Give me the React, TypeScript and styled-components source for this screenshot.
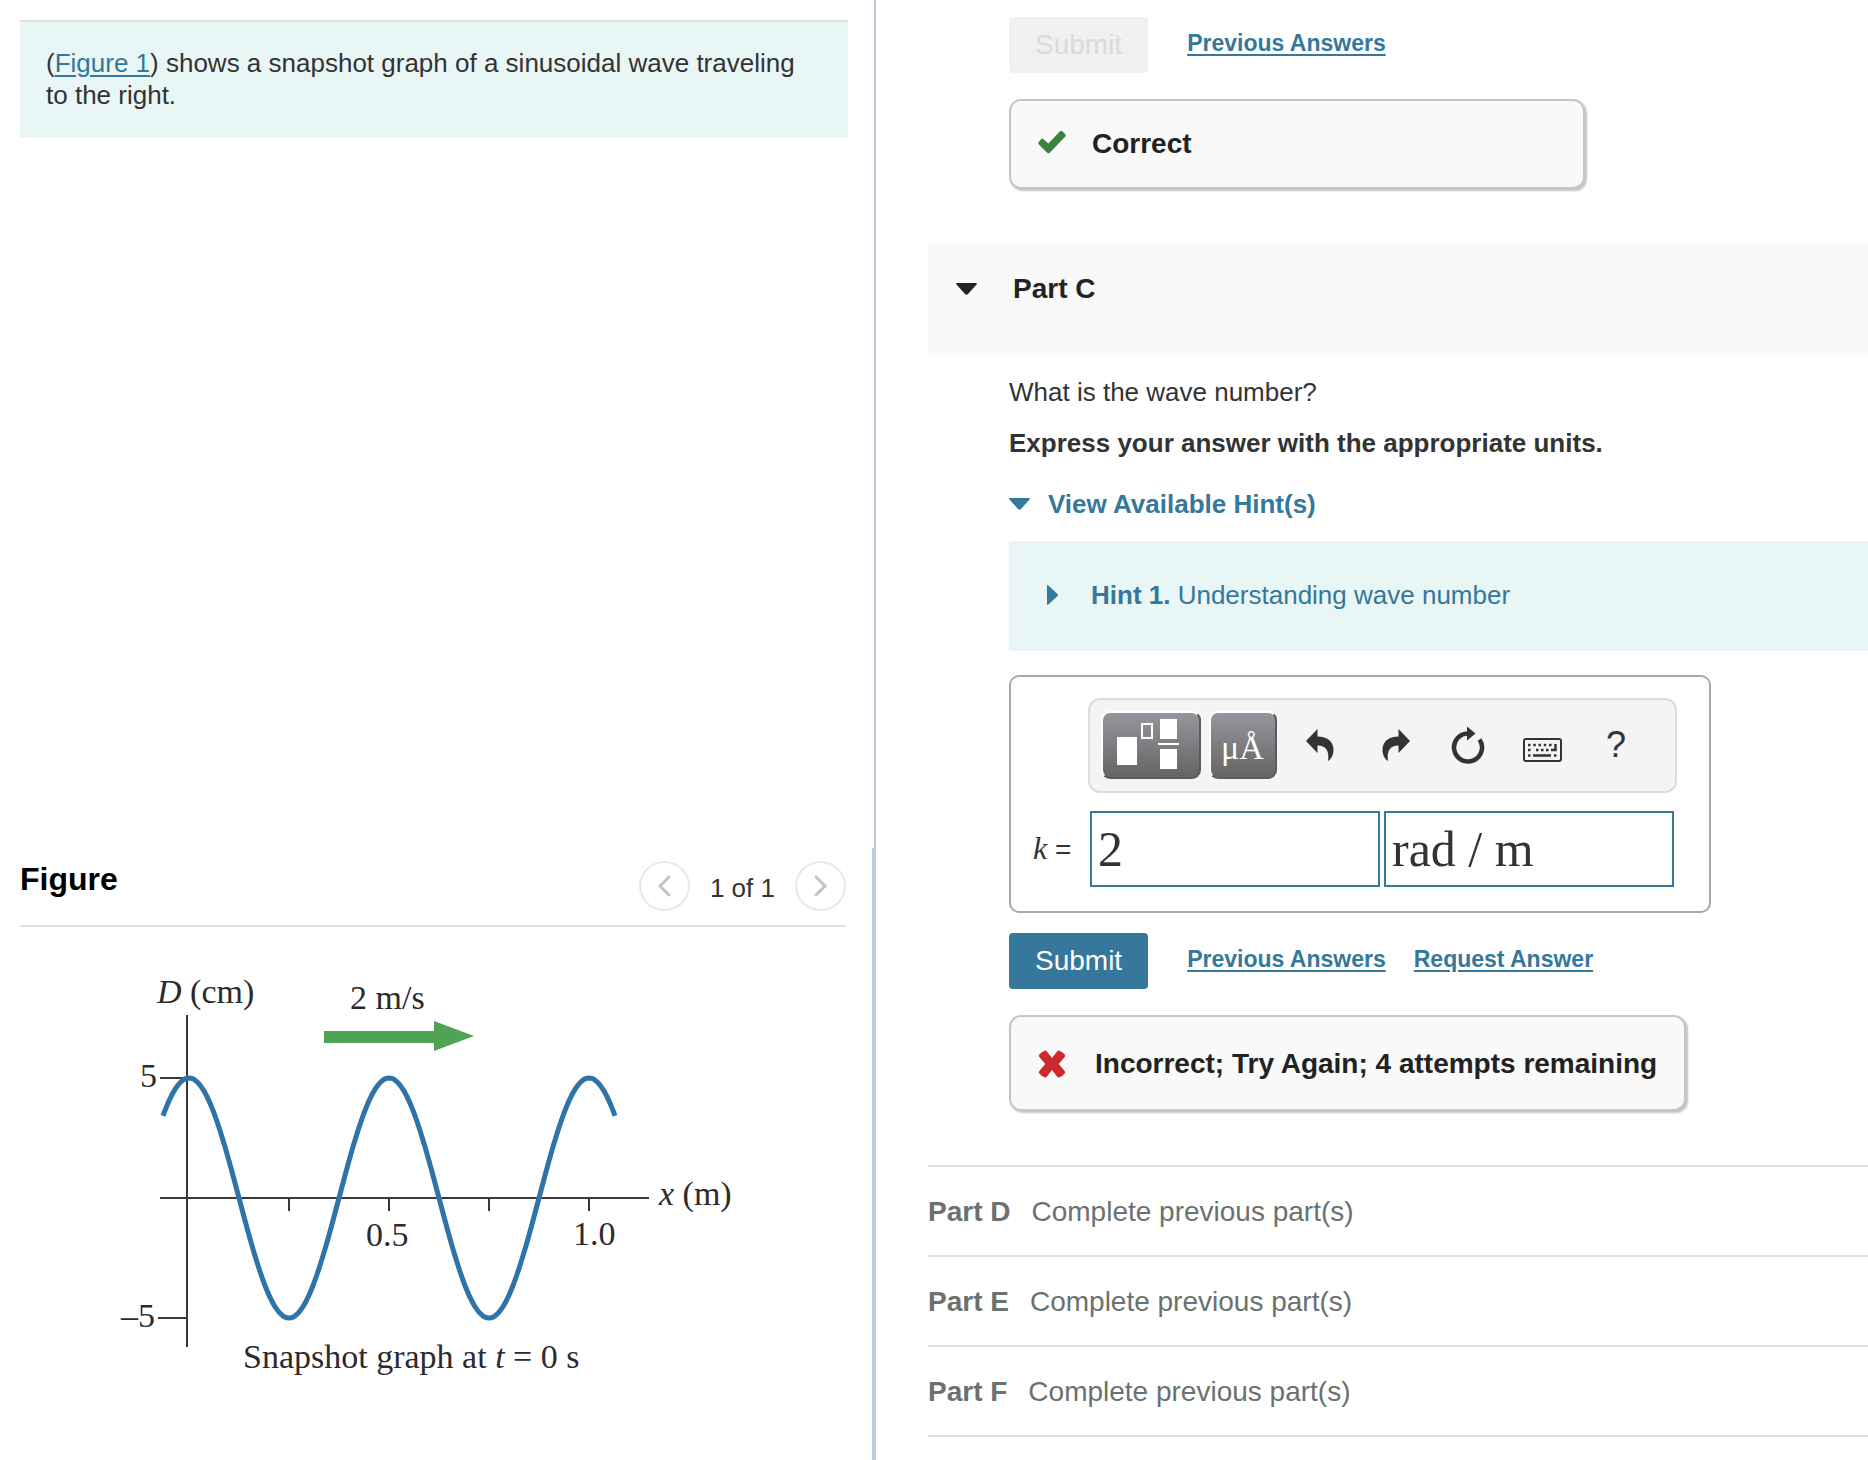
import React, { useState } from "react";
import styled, { createGlobalStyle } from "styled-components";

const teal = "#35789b";
const sans = '"Liberation Sans", Arial, Helvetica, sans-serif';
const serif = '"Liberation Serif", "Times New Roman", serif';

const GlobalStyle = createGlobalStyle`
  *, *::before, *::after { box-sizing: border-box; }
  body {
    margin: 0;
    background: #fff;
    color: #333;
    font-family: ${sans};
    font-size: 26px;
    line-height: 32px;
  }
  p, h2, h3 { margin: 0; }
  button, input { font: inherit; color: inherit; }
  button { cursor: pointer; }
`;

const Page = styled.div`
  display: grid;
  grid-template-columns: minmax(0, 219fr) minmax(0, 248fr);
  min-height: 100vh;
`;

/* ---------- left pane ---------- */

const LeftPane = styled.aside`
  display: flex;
  flex-direction: column;
`;

const Intro = styled.section`
  flex: 1;
  padding: 20px 26px 0 20px;
  border-right: 2px solid #bfc7da;
`;

const Callout = styled.p`
  padding: 25px 26px 27px;
  border-top: 2px solid #dfe1e0;
  background: #e8f6f5;
`;

const TextLink = styled.a`
  color: ${teal};
  text-decoration: underline;
  text-decoration-thickness: 2px;
  text-underline-offset: 3px;
`;

const FigurePane = styled.section`
  padding: 0 26px 60px 20px;
  border-right: 4px solid #bccbe0;
`;

const FigureHeader = styled.header`
  display: flex;
  justify-content: space-between;
  align-items: flex-start;
  padding: 13px 0 14px;
  border-bottom: 2px solid #dfe0e0;
`;

const FigureTitle = styled.h2`
  color: #000;
  font-size: 32px;
  line-height: 36px;
`;

const Pager = styled.nav`
  display: flex;
  align-items: center;
  gap: 20px;
`;

const PagerLabel = styled.span`
  padding-top: 4px;
`;

const PagerButton = styled.button`
  display: grid;
  place-items: center;
  width: 51px;
  height: 50px;
  padding: 0;
  border: 2px solid #e8e8e8;
  border-radius: 50%;
  background: #fff;
`;

const Graph = styled.svg`
  display: block;
  width: 660px;
  max-width: 100%;
  margin: 33px 0 0 80px;
  font-family: ${serif};
  font-size: 34px;
  fill: #2d2a2e;
`;

/* ---------- right pane ---------- */

const RightPane = styled.main`
  padding: 17px 0 22px 52px;
  overflow: hidden;
`;

const Indented = styled.div`
  padding-left: 81px;
`;

const ActionRow = styled.div`
  display: flex;
  align-items: center;
  gap: 39px;
`;

const SubmitButton = styled.button`
  height: 56px;
  padding: 0 26px;
  border: 0;
  border-radius: 4px;
  background: ${teal};
  color: #fff;
  font-size: 28px;

  &:disabled {
    background: #f0f0f0;
    color: #dadada;
    cursor: default;
  }
`;

const ActionLinks = styled.div`
  display: flex;
  gap: 28px;
  padding-bottom: 4px;
  font-size: 23px;
  font-weight: bold;
`;

const Feedback = styled.div<{ $tall?: boolean }>`
  display: flex;
  align-items: center;
  gap: ${(p) => (p.$tall ? 29 : 26)}px;
  width: fit-content;
  min-width: 576px;
  min-height: ${(p) => (p.$tall ? 96 : 90)}px;
  margin: 26px 0 54px;
  padding: ${(p) => (p.$tall ? "2px 27px 0" : "0 27px")};
  border: 2px solid #c6c6c6;
  border-radius: 12px;
  background: #f9f9f9;
  box-shadow: 2px 2px 2px #c4c4c4;
  color: #222;
  font-size: 28px;
  font-weight: bold;
`;

const PartHeader = styled.h2`
  background: #f9f9f9;
`;

const PartToggle = styled.button`
  display: flex;
  align-items: center;
  gap: 36px;
  width: 100%;
  padding: 28px 28px 48px;
  border: 0;
  background: none;
  color: #222;
  font-size: 28px;
  font-weight: bold;
  line-height: 36px;
  text-align: left;
`;

const Question = styled.p`
  padding-top: 21px;
`;

const Instruction = styled.p`
  padding-top: 19px;
  font-weight: bold;
`;

const HintToggle = styled.button`
  display: flex;
  align-items: center;
  gap: 18px;
  margin: 29px 0 21px;
  padding: 0;
  border: 0;
  background: none;
  color: ${teal};
  font-weight: bold;
`;

const HintPanel = styled.div`
  padding: 38px 38px 40px;
  background: #e8f6f5;
`;

const HintItem = styled.button`
  display: flex;
  align-items: center;
  gap: 33px;
  padding: 0;
  border: 0;
  background: none;
  color: ${teal};
`;

const AnswerBox = styled.div`
  display: grid;
  grid-template-columns: 55px minmax(0, 589px);
  row-gap: 18px;
  align-items: center;
  width: fit-content;
  margin: 24px 0 20px;
  padding: 21px 32px 24px 22px;
  border: 2px solid #a9a9a9;
  border-radius: 10px;
`;

const Toolbar = styled.div`
  grid-column: 2;
  display: flex;
  align-items: center;
  height: 95px;
  padding: 0 11px 2px;
  border: 2px solid #dcdcdc;
  border-radius: 12px;
  background: #f4f4f4;
`;

const PaletteButton = styled.button<{ $wide?: boolean }>`
  display: flex;
  align-items: center;
  width: ${(p) => (p.$wide ? 100 : 68)}px;
  height: 68px;
  margin-right: 8px;
  padding: 0 0 2px ${(p) => (p.$wide ? 13 : 10)}px;
  border: 2px solid;
  border-color: #fff #5b5b5d #5e5e5e #fff;
  border-radius: 9px;
  background: linear-gradient(#98979f, #636363) border-box;
  color: #fff;
  font-family: ${serif};
  font-size: 34px;
`;

const UnitsGlyph = styled.span`
  padding-top: 8px;
`;

const ToolButton = styled.button`
  display: grid;
  place-items: center;
  width: 74px;
  height: 68px;
  padding: 0 4px 0 0;
  border: 0;
  background: none;
  font-size: 36px;
`;

const VariableLabel = styled.label`
  font-size: 28px;

  i {
    font-family: ${serif};
    font-size: 32px;
  }
`;

const Fields = styled.div`
  display: flex;
  gap: 4px;
  padding: 0 3px 0 2px;
`;

const Field = styled.input`
  flex: 1;
  min-width: 0;
  height: 76px;
  padding: 0 6px;
  border: 2px solid ${teal};
  border-radius: 0;
  background: #fff;
  font-family: ${serif};
  font-size: 50px;
`;

const LockedParts = styled.div`
  border-top: 2px solid #dfe0e0;
  color: #6a716f;
  font-size: 28px;
`;

const LockedPart = styled.div`
  display: flex;
  align-items: center;
  gap: 21px;
  height: 90px;
  padding-top: 2px;
  border-bottom: 2px solid #dfe0e0;

  h3 { font-size: 28px; }
`;

/* ---------- icons ---------- */

const CaretDown = () => (
  <svg width="21" height="12" viewBox="0 0 21 12" fill="currentColor" aria-hidden="true">
    <path d="M1 0H20Q21.500 0 20.500 1.500L12 11Q10.500 12.500 9 11L.5 1.500Q-.5 0 1 0Z" />
  </svg>
);

const CaretRight = () => (
  <svg width="11" height="20" viewBox="0 0 11 20" fill="currentColor" aria-hidden="true">
    <path d="M0 1Q0 -.5 1.300.5L10.500 9Q11.300 10 10.500 11L1.300 19.500Q0 20.500 0 19Z" />
  </svg>
);

const Chevron = ({ flip }: { flip?: boolean }) => (
  <svg width="16" height="24" viewBox="0 0 16 24" fill="none" stroke="#c4c4c4" strokeWidth="3" strokeLinecap="round" aria-hidden="true">
    <path d={flip ? "M3 3L12 12L3 21" : "M13 3L4 12L13 21"} />
  </svg>
);

const CheckIcon = () => (
  <svg width="28" height="28" viewBox="0 0 28 28" fill="#3a833f" aria-hidden="true">
    <path d="M.6 12.200L3.200 8.900Q4.200 7.900 5.200 8.900L10.400 13.500L22 1.200Q23.200.2 24.400 1.200L27.300 4.200Q28.200 5.200 27.300 6.400L12 22.500Q10.400 23.900 8.900 22.500L.6 14.200Q-.2 13.200.6 12.200Z" />
  </svg>
);

const CrossIcon = () => (
  <svg width="28" height="28" viewBox="0 0 28 28" fill="#cc2a2c" aria-hidden="true">
    <path d="M6.500.8Q7.800.2 8.700 1.300L14 8L19.300 1.300Q20.200.2 21.500.8Q25 2.200 26.800 4.800Q27.600 6 26.700 7.100L20.700 14L26.700 20.900Q27.600 22 26.800 23.200Q25 25.800 21.500 27.200Q20.200 27.800 19.300 26.700L14 20L8.700 26.700Q7.800 27.800 6.500 27.200Q3 25.800 1.200 23.200Q.4 22 1.300 20.900L7.300 14L1.300 7.100Q.4 6 1.200 4.800Q3 2.200 6.500.8Z" />
  </svg>
);

const TemplatesIcon = () => (
  <svg width="64" height="52" viewBox="0 0 64 52" fill="#fff" aria-hidden="true">
    <rect x="1" y="19" width="20" height="28" />
    <rect x="26" y="6" width="10" height="14" fill="none" stroke="#fff" strokeWidth="2" />
    <rect x="44" y="1" width="17" height="20" />
    <rect x="42" y="25" width="21" height="2" />
    <rect x="44" y="31" width="17" height="20" />
  </svg>
);

const curvedArrow =
  "M6 16L17.500 4V11.500C28 11.500 33.500 17 33.500 25C33.500 30 31 34 28 36C29.500 26 26 20.500 17.500 20.500V28Z";

const UndoIcon = () => (
  <svg width="40" height="40" viewBox="0 0 40 40" fill="currentColor" aria-hidden="true">
    <path d={curvedArrow} />
  </svg>
);

const RedoIcon = () => (
  <svg width="40" height="40" viewBox="0 0 40 40" fill="currentColor" aria-hidden="true">
    <path d={curvedArrow} transform="translate(42 0) scale(-1 1)" />
  </svg>
);

const ResetIcon = () => (
  <svg width="40" height="40" viewBox="0 0 40 40" aria-hidden="true">
    <path d="M31.500 14.500A14 14 0 1 1 20 8.500" fill="none" stroke="currentColor" strokeWidth="4.500" />
    <path d="M19 1.500L27.500 8.500L19 15.500Z" fill="currentColor" />
  </svg>
);

const KeyboardIcon = () => (
  <svg width="40" height="40" viewBox="0 0 40 40" aria-hidden="true">
    <rect x="2" y="14" width="37" height="22" rx="2" fill="none" stroke="currentColor" strokeWidth="2" />
    <g fill="none" stroke="currentColor" strokeWidth="2.500">
      <path d="M6 20H30" strokeDasharray="2.500 2.750" />
      <path d="M6 25H11M14 25H28" strokeDasharray="2.500 2.500" />
      <path d="M33.500 19V25H29" />
      <path d="M6 30.500H8.500M11 30.500H29M32 30.500H34.500" />
    </g>
  </svg>
);

/* ---------- wave graph ---------- */

const ORIGIN_X = 89;
const AXIS_Y = 238;
const WAVELENGTH = 200;
const AMPLITUDE = 120;

const wavePath = Array.from({ length: 227 }, (_, i) => {
  const x = ORIGIN_X - 26 + i * 2;
  const phase = (2 * Math.PI * (x - ORIGIN_X)) / WAVELENGTH;
  const y = AXIS_Y - AMPLITUDE * Math.cos(phase);
  return `${i === 0 ? "M" : "L"}${x} ${y.toFixed(1)}`;
}).join("");

const WaveGraph = () => (
  <Graph viewBox="0 0 660 440" role="img" aria-label="Snapshot graph of a sinusoidal wave at t = 0 s">
    <g stroke="#3a383b" strokeWidth="2">
      <path d="M87 55V387M60 238H549" />
      <path d="M189 238V251M289 238V251M389 238V251M489 238V251M60 118H87M58 358H87" />
    </g>
    <path d={wavePath} fill="none" stroke="#2f74a8" strokeWidth="5" />
    <path d="M224 71H334V61L374 76L334 91V83H224Z" fill="#4ea452" />
    <text x="57" y="43"><tspan fontStyle="italic">D</tspan> (cm)</text>
    <text x="250" y="49">2 m/s</text>
    <text x="40" y="127">5</text>
    <text x="21" y="367">–5</text>
    <text x="266" y="286">0.5</text>
    <text x="473" y="285">1.0</text>
    <text x="559" y="245"><tspan fontStyle="italic">x</tspan> (m)</text>
    <text x="143" y="408">Snapshot graph at <tspan fontStyle="italic">t</tspan> = 0 s</text>
  </Graph>
);

const lockedParts = ["Part D", "Part E", "Part F"];

export default function App() {
  const [value, setValue] = useState("2");
  const [units, setUnits] = useState("rad / m");

  return (
    <>
      <GlobalStyle />
      <Page>
        <LeftPane>
          <Intro>
            <Callout>
              (<TextLink href="#figure">Figure 1</TextLink>) shows a snapshot graph of a sinusoidal wave traveling to the right.
            </Callout>
          </Intro>
          <FigurePane id="figure">
            <FigureHeader>
              <FigureTitle>Figure</FigureTitle>
              <Pager aria-label="Figures">
                <PagerButton type="button" aria-label="Previous figure"><Chevron /></PagerButton>
                <PagerLabel>1 of 1</PagerLabel>
                <PagerButton type="button" aria-label="Next figure"><Chevron flip /></PagerButton>
              </Pager>
            </FigureHeader>
            <WaveGraph />
          </FigurePane>
        </LeftPane>

        <RightPane>
          <Indented>
            <ActionRow>
              <SubmitButton type="button" disabled>Submit</SubmitButton>
              <ActionLinks>
                <TextLink href="#previous-b">Previous Answers</TextLink>
              </ActionLinks>
            </ActionRow>
            <Feedback>
              <CheckIcon />
              Correct
            </Feedback>
          </Indented>

          <PartHeader>
            <PartToggle type="button" aria-expanded="true">
              <CaretDown />
              Part C
            </PartToggle>
          </PartHeader>

          <Indented>
            <Question>What is the wave number?</Question>
            <Instruction>Express your answer with the appropriate units.</Instruction>
            <HintToggle type="button" aria-expanded="true">
              <CaretDown />
              View Available Hint(s)
            </HintToggle>
            <HintPanel>
              <HintItem type="button" aria-expanded="false">
                <CaretRight />
                <span><b>Hint 1.</b> Understanding wave number</span>
              </HintItem>
            </HintPanel>

            <AnswerBox>
              <Toolbar role="toolbar" aria-label="Equation tools">
                <PaletteButton type="button" $wide aria-label="Templates"><TemplatesIcon /></PaletteButton>
                <PaletteButton type="button" aria-label="Units"><UnitsGlyph>μÅ</UnitsGlyph></PaletteButton>
                <ToolButton type="button" aria-label="Undo"><UndoIcon /></ToolButton>
                <ToolButton type="button" aria-label="Redo"><RedoIcon /></ToolButton>
                <ToolButton type="button" aria-label="Reset"><ResetIcon /></ToolButton>
                <ToolButton type="button" aria-label="Keyboard shortcuts"><KeyboardIcon /></ToolButton>
                <ToolButton type="button" aria-label="Help">?</ToolButton>
              </Toolbar>
              <VariableLabel htmlFor="value"><i>k</i> =</VariableLabel>
              <Fields>
                <Field id="value" value={value} onChange={(e) => setValue(e.target.value)} />
                <Field aria-label="Units" value={units} onChange={(e) => setUnits(e.target.value)} />
              </Fields>
            </AnswerBox>

            <ActionRow>
              <SubmitButton type="button">Submit</SubmitButton>
              <ActionLinks>
                <TextLink href="#previous-c">Previous Answers</TextLink>
                <TextLink href="#request">Request Answer</TextLink>
              </ActionLinks>
            </ActionRow>
            <Feedback $tall>
              <CrossIcon />
              Incorrect; Try Again; 4 attempts remaining
            </Feedback>
          </Indented>

          <LockedParts>
            {lockedParts.map((part) => (
              <LockedPart key={part}>
                <h3>{part}</h3>
                <span>Complete previous part(s)</span>
              </LockedPart>
            ))}
          </LockedParts>
        </RightPane>
      </Page>
    </>
  );
}
